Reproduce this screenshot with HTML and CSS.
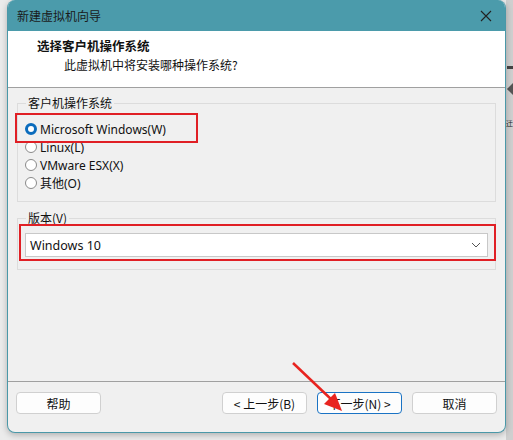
FILE: index.html
```html
<!DOCTYPE html>
<html lang="zh-CN">
<head>
    <meta charset="UTF-8">
    <title>新建虚拟机向导</title>
    <link rel="stylesheet" href="styles.css">
</head>
<body>
    <div class="desk">
        <div class="wizard">
            <div class="titlebar">
                <span class="title">新建虚拟机向导</span>
                <svg class="close" width="12" height="12" viewBox="0 0 12 12">
                    <path d="M1 1L11 11M11 1L1 11" stroke="#222" stroke-width="1.1" fill="none"/>
                </svg>
            </div>
            <div class="header">
                <div class="heading">选择客户机操作系统</div>
                <div class="subheading">此虚拟机中将安装哪种操作系统?</div>
            </div>
            <div class="content">
                <fieldset class="group">
                    <legend>客户机操作系统</legend>
                    <label class="radio"><span class="dot checked"></span>Microsoft Windows(W)</label>
                    <label class="radio"><span class="dot"></span>Linux(L)</label>
                    <label class="radio"><span class="dot"></span>VMware ESX(X)</label>
                    <label class="radio"><span class="dot"></span>其他(O)</label>
                </fieldset>
                <fieldset class="group version">
                    <legend>版本(V)</legend>
                    <div class="combo">
                        <span>Windows 10</span>
                        <svg width="10" height="6" viewBox="0 0 10 6">
                            <path d="M1 1L5 5L9 1" stroke="#555" stroke-width="1" fill="none"/>
                        </svg>
                    </div>
                </fieldset>
            </div>
            <div class="footer">
                <button class="btn">帮助</button>
                <div class="spacer"></div>
                <button class="btn">&lt; 上一步(B)</button>
                <button class="btn primary">下一步(N) &gt;</button>
                <button class="btn">取消</button>
            </div>
        </div>
        <div class="behind">
            <div class="bar"></div>
            <div class="diamond"></div>
            <div class="glyph">迁</div>
        </div>
    </div>

    <!-- red markers drawn over the dialog -->
    <div class="mark mark-os"></div>
    <div class="mark mark-ver"></div>
    <svg class="arrow" width="70" height="70" viewBox="0 0 70 70">
        <line x1="2" y1="2" x2="42" y2="40" stroke="#e8231f" stroke-width="2.5"/>
        <polygon points="51,50 33,43 44,32" fill="#e8231f"/>
    </svg>
</body>
</html>
```
FILE: styles.css
```css
body {
    margin: 0;
    background: #ebebeb;
    font-family: "Noto Sans", "Noto Sans CJK SC", sans-serif;
    font-size: 12px;
    color: #111;
    width: 513px;
    height: 440px;
    overflow: hidden;
    position: relative;
}

.desk {
    display: flex;
    padding-left: 7px;
    height: 440px;
}

.wizard {
    width: 497px;
    height: 432px;
    display: flex;
    flex-direction: column;
    background: #f0f0f0;
    border: 1px solid #4a98a8;
    border-top: none;
    border-radius: 8px;
    overflow: hidden;
    box-shadow: 0 2px 6px rgba(0, 0, 0, 0.25);
    position: relative;
    z-index: 1;
}

.titlebar {
    height: 31px;
    flex: none;
    background: #4b9bab;
    display: flex;
    align-items: center;
    justify-content: space-between;
    padding: 0 13px 0 9px;
}

.title {
    font-family: "Noto Sans CJK SC", sans-serif;
    font-size: 12px;
    color: #1a1a1a;
}

.header {
    height: 57px;
    flex: none;
    background: #fff;
    border-bottom: 1px solid #a0a0a0;
    padding: 6px 0 0 29px;
    box-sizing: border-box;
    font-family: "Noto Sans CJK SC", sans-serif;
}

.heading {
    font-weight: bold;
    font-size: 12.5px;
    line-height: 18px;
}

.subheading {
    padding-left: 27px;
    line-height: 18px;
    margin-top: 1px;
}

.content {
    flex: 1;
    padding: 7px 9px 0 9px;
    display: flex;
    flex-direction: column;
    gap: 8px;
}

.group {
    margin: 0;
    border: 1px solid #dcdcdc;
    padding: 9px 8px 9px 7px;
    min-height: 0;
}

.group legend {
    font-family: "Noto Sans CJK SC", sans-serif;
    padding: 0 2px;
    margin-left: 1px;
    line-height: 16px;
}

.radio {
    display: flex;
    align-items: center;
    height: 18px;
    gap: 3px;
    font-family: "Noto Sans", "Noto Sans CJK SC", sans-serif;
}

.dot {
    width: 12px;
    height: 12px;
    border: 1px solid #8a8a8a;
    border-radius: 50%;
    background: #fff;
    box-sizing: border-box;
}

.dot.checked {
    border: 3.5px solid #0b6cbd;
    background: #fff;
}

.version {
    padding: 7px 7px 12px 7px;
}

.combo {
    height: 22px;
    background: #fff;
    border: 1px solid #c8c8c8;
    display: flex;
    align-items: center;
    justify-content: space-between;
    padding: 0 6px 0 4px;
    font-size: 12.5px;
}

.footer {
    height: 40px;
    flex: none;
    border-top: 1px solid #a0a0a0;
    display: flex;
    align-items: flex-start;
    padding: 10px 8px 0 8px;
    gap: 10px;
}

.spacer {
    flex: 1;
}

.btn {
    width: 85px;
    height: 22px;
    background: #fdfdfd;
    border: 1px solid #d0d0d0;
    border-radius: 4px;
    font-family: "Noto Sans CJK SC", "Noto Sans", sans-serif;
    font-size: 12px;
    color: #111;
    padding: 0;
}

.btn.primary {
    border-color: #1a73c4;
}

.behind {
    flex: 1;
    background: #cfcfcf;
    position: relative;
    overflow: hidden;
}

.behind .bar {
    position: absolute;
    left: 1px;
    top: 66px;
    width: 6px;
    height: 3px;
    background: #444;
}

.behind .diamond {
    position: absolute;
    left: 3px;
    top: 84px;
    width: 10px;
    height: 10px;
    background: #555;
    transform: rotate(45deg);
}

.behind .glyph {
    position: absolute;
    left: 0;
    top: 118px;
    font-family: "Noto Sans CJK SC", sans-serif;
    font-size: 7px;
    color: #222;
}

.mark {
    position: absolute;
    border: 2px solid #e01f25;
    z-index: 2;
}

.mark-os {
    left: 15px;
    top: 113px;
    width: 179px;
    height: 26px;
}

.mark-ver {
    left: 19px;
    top: 224px;
    width: 473px;
    height: 33px;
}

.arrow {
    position: absolute;
    left: 291px;
    top: 361px;
    z-index: 2;
}
```
